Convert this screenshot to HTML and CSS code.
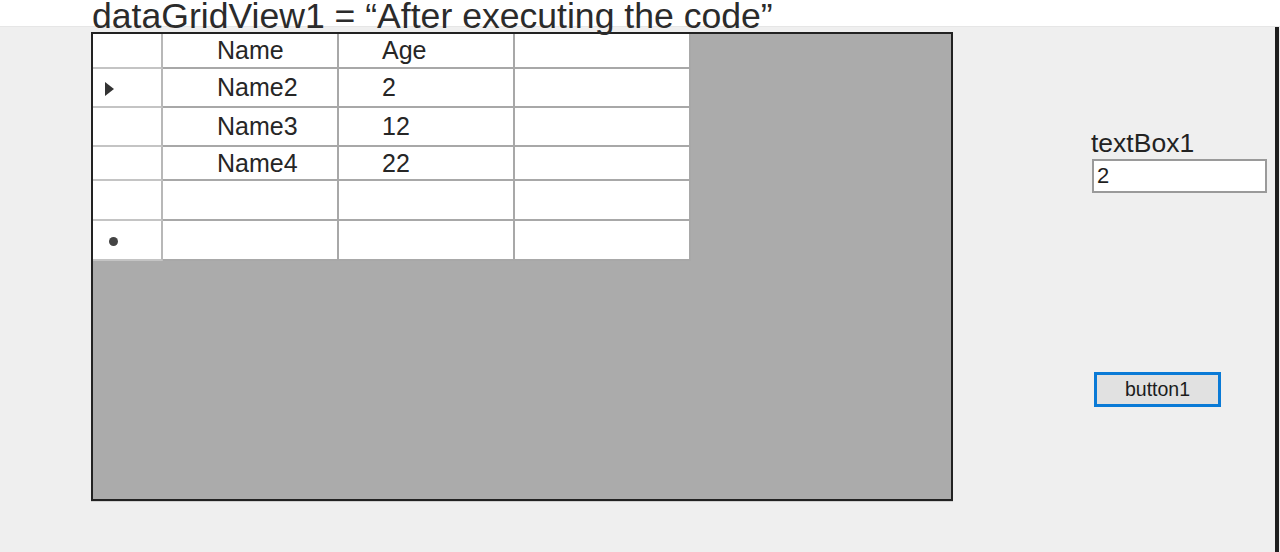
FILE: index.html
```html
<!DOCTYPE html>
<html>
<head>
<meta charset="utf-8">
<link rel="stylesheet" href="styles.css">
</head>
<body>
<div class="page">
  <div class="titlebar"><h1 class="title">dataGridView1 = “After executing the code”</h1></div>
  <div class="main">
    <div class="dgv">
      <div class="table">
        <div class="row r-h">
          <div class="cell hdr"></div>
          <div class="cell">Name</div>
          <div class="cell">Age</div>
          <div class="cell"></div>
        </div>
        <div class="row r-1">
          <div class="cell hdr"><span class="tri"></span></div>
          <div class="cell">Name2</div>
          <div class="cell">2</div>
          <div class="cell"></div>
        </div>
        <div class="row r-2">
          <div class="cell hdr"></div>
          <div class="cell">Name3</div>
          <div class="cell">12</div>
          <div class="cell"></div>
        </div>
        <div class="row r-3">
          <div class="cell hdr"></div>
          <div class="cell">Name4</div>
          <div class="cell">22</div>
          <div class="cell"></div>
        </div>
        <div class="row r-4">
          <div class="cell hdr"></div>
          <div class="cell"></div>
          <div class="cell"></div>
          <div class="cell"></div>
        </div>
        <div class="row r-5">
          <div class="cell hdr"><span class="star"></span></div>
          <div class="cell"></div>
          <div class="cell"></div>
          <div class="cell"></div>
        </div>
      </div>
    </div>
    <div class="side">
      <div class="label">textBox1</div>
      <div class="textbox">2</div>
      <div class="button">button1</div>
    </div>
    <div class="edge"></div>
  </div>
</div>
</body>
</html>
```
FILE: styles.css
```css
html, body {
  margin: 0;
  padding: 0;
}
body {
  width: 1280px;
  height: 552px;
  overflow: hidden;
  background: #efefef;
  font-family: "Liberation Sans", Arial, sans-serif;
  color: #222;
}
.page {
  display: flex;
  flex-direction: column;
  height: 552px;
}
.titlebar {
  height: 26px;
  background: #fff;
  border-bottom: 1px solid #e6e6e6;
  position: relative;
  z-index: 1;
}
.title {
  margin: 0;
  padding-left: 92px;
  font-size: 35.6px;
  font-weight: normal;
  line-height: 32px;
  color: #2b2b2b;
  white-space: nowrap;
}
.main {
  flex: 1;
  display: flex;
  align-items: flex-start;
}
.dgv {
  margin-left: 91px;
  margin-top: 5px;
  width: 858px;
  height: 465px;
  border: 2px solid #222;
  background: #ababab;
  box-shadow: 0 1px 0 #d0d0d0;
}
.table {
  display: flex;
  flex-direction: column;
  width: 598px;
  background: #fff;
}
.row {
  display: grid;
  grid-template-columns: 70px 176px 176px 176px;
}
.r-h { height: 35px; }
.r-1 { height: 39px; }
.r-2 { height: 39px; }
.r-3 { height: 34px; }
.r-4 { height: 40px; }
.r-5 { height: 40px; }
.cell {
  box-sizing: border-box;
  border-right: 2px solid #a8a8a8;
  border-bottom: 2px solid #a8a8a8;
  background: #fff;
  font-size: 25px;
  display: flex;
  align-items: center;
  padding-left: 54px;
  color: #262626;
}
.cell:nth-child(3) {
  padding-left: 43px;
}
.cell.hdr {
  padding-left: 12px;
  border-right-color: #b8b8b8;
  border-bottom-color: #c4c4c4;
}
.tri {
  width: 0;
  height: 0;
  border-top: 7px solid transparent;
  border-bottom: 7px solid transparent;
  border-left: 9px solid #333;
  margin-top: 3px;
}
.star {
  width: 9px;
  height: 9px;
  border-radius: 50%;
  background: #444;
  margin-left: 4px;
  margin-top: 2px;
}
.side {
  margin-left: 138px;
  margin-top: 101px;
  display: flex;
  flex-direction: column;
  align-items: flex-start;
}
.label {
  font-size: 26.5px;
  line-height: 30px;
  color: #222;
}
.textbox {
  box-sizing: border-box;
  margin-left: 1px;
  margin-top: 1px;
  width: 175px;
  height: 34px;
  border: 2px solid #9a9a9a;
  background: #fff;
  font-size: 22px;
  line-height: 30px;
  padding-left: 3px;
  color: #1e1e1e;
}
.button {
  box-sizing: border-box;
  margin-left: 3px;
  margin-top: 179px;
  width: 127px;
  height: 35px;
  border: 3px solid #0a7ad6;
  background: #e1e1e1;
  font-size: 19.5px;
  display: flex;
  align-items: center;
  justify-content: center;
  color: #1c1c1c;
}
.edge {
  margin-left: auto;
  width: 4px;
  height: 100%;
  background: #1e1e1e;
  margin-right: 1px;
}
```
